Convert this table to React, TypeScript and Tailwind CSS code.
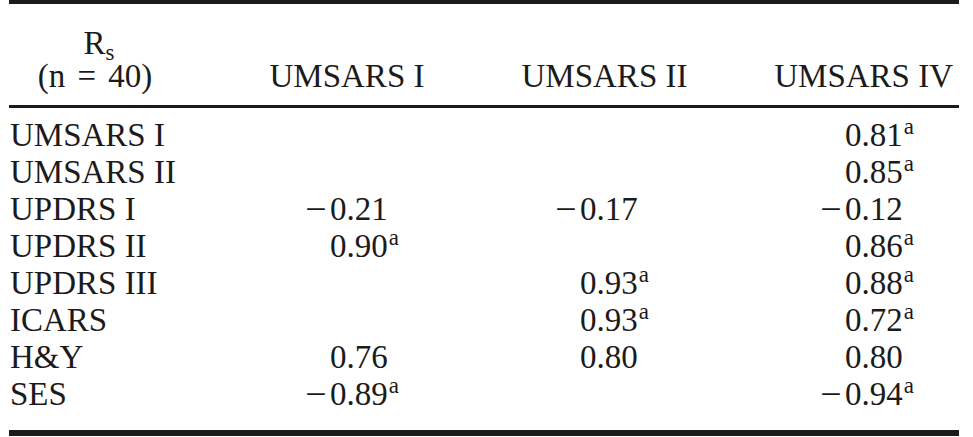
import React from "react";

type Cell = { v: string; neg?: boolean; sig?: boolean } | null;

const rows: { label: string; cells: Cell[] }[] = [
  { label: "UMSARS I", cells: [null, null, { v: "0.81", sig: true }] },
  { label: "UMSARS II", cells: [null, null, { v: "0.85", sig: true }] },
  { label: "UPDRS I", cells: [{ v: "0.21", neg: true }, { v: "0.17", neg: true }, { v: "0.12", neg: true }] },
  { label: "UPDRS II", cells: [{ v: "0.90", sig: true }, null, { v: "0.86", sig: true }] },
  { label: "UPDRS III", cells: [null, { v: "0.93", sig: true }, { v: "0.88", sig: true }] },
  { label: "ICARS", cells: [null, { v: "0.93", sig: true }, { v: "0.72", sig: true }] },
  { label: "H&Y", cells: [{ v: "0.76" }, { v: "0.80" }, { v: "0.80" }] },
  { label: "SES", cells: [{ v: "0.89", neg: true, sig: true }, null, { v: "0.94", neg: true, sig: true }] },
];

// left padding per value column so the digits line up on the decimal
const valuePad = ["pl-[84px]", "pl-[78px]", "pl-[84px]"];

function Value({ cell }: { cell: Cell }) {
  if (!cell) return null;
  return (
    <span className="inline-flex whitespace-nowrap">
      <span className="inline-block w-[27px] text-right pr-[3px] scale-x-[1.15] origin-right">
        {cell.neg ? "\u2212" : ""}
      </span>
      <span>
        {cell.v}
        {cell.sig && <sup className="ml-[1px] text-[23px] -top-[0.52em]">a</sup>}
      </span>
    </span>
  );
}

export default function App() {
  return (
    <div className="min-h-screen w-[973px] h-[437px] bg-white overflow-hidden text-[#1c1a1b] font-['Liberation_Serif','Times_New_Roman',serif] text-[33px]">
      <div className="ml-[9px] w-[950px]">
        {/* Top rule */}
        <div className="h-[4px] bg-[#1c1a1b]" />

        {/* Header */}
        <div className="grid grid-cols-[210px_256px_259px_225px] items-end pt-[23px] pb-[12px] leading-[33px]">
          <div>
            <div className="w-[180px] text-center">
              R<sub className="text-[23px]">s</sub>
            </div>
            <div className="w-[172px] text-center [word-spacing:4px]">(n = 40)</div>
          </div>
          <div className="text-center">UMSARS I</div>
          <div className="text-center">UMSARS II</div>
          <div className="text-right pr-[6px]">UMSARS IV</div>
        </div>

        {/* Header rule */}
        <div className="h-[3px] bg-[#1c1a1b]" />

        {/* Body */}
        <div className="pt-[9px] pb-[17px] leading-[37px]">
          {rows.map((r) => (
            <div key={r.label} className="grid grid-cols-[210px_256px_259px_225px] h-[37px]">
              <div className="pl-[1px] whitespace-nowrap">{r.label}</div>
              {r.cells.map((c, i) => (
                <div key={i} className={valuePad[i]}>
                  <Value cell={c} />
                </div>
              ))}
            </div>
          ))}
        </div>

        {/* Bottom rule */}
        <div className="h-[6px] bg-[#1c1a1b]" />
      </div>
    </div>
  );
}
